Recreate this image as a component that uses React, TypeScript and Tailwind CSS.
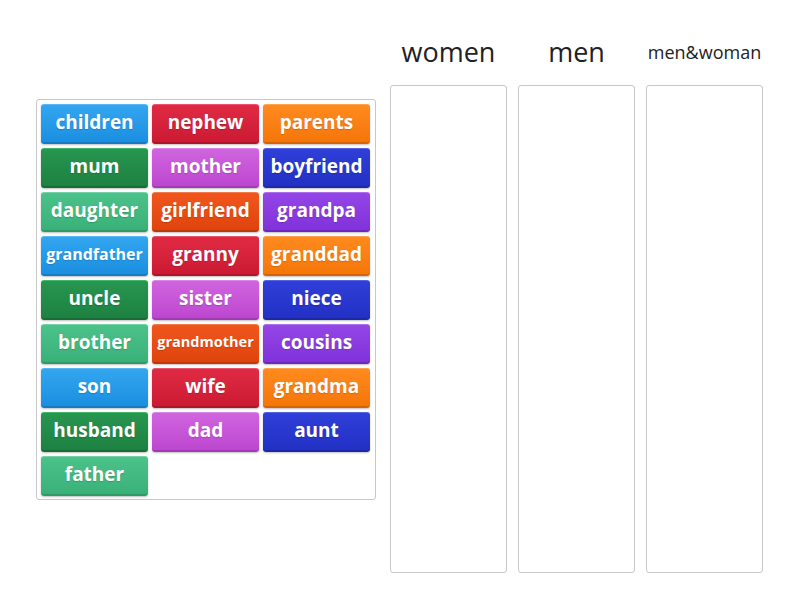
const tiles: { word: string; size?: string }[] = [
  { word: "children" },
  { word: "nephew" },
  { word: "parents" },
  { word: "mum" },
  { word: "mother" },
  { word: "boyfriend" },
  { word: "daughter" },
  { word: "girlfriend" },
  { word: "grandpa" },
  { word: "grandfather", size: "text-[16px]" },
  { word: "granny" },
  { word: "granddad" },
  { word: "uncle" },
  { word: "sister" },
  { word: "niece" },
  { word: "brother" },
  { word: "grandmother", size: "text-[14.5px]" },
  { word: "cousins" },
  { word: "son" },
  { word: "wife" },
  { word: "grandma" },
  { word: "husband" },
  { word: "dad" },
  { word: "aunt" },
  { word: "father" },
];

// nine colours, repeating in reading order
const colours = [
  "from-[#33a6f0] to-[#1a8ee0] border-t-[#5cb8f4] border-b-[#157bc4]",
  "from-[#e02a44] to-[#cc1a33] border-t-[#e9566b] border-b-[#b0142b]",
  "from-[#ff8a1e] to-[#f57608] border-t-[#ffa24d] border-b-[#d66405]",
  "from-[#279650] to-[#1d8141] border-t-[#3fb869] border-b-[#186d37]",
  "from-[#d064df] to-[#bd47d0] border-t-[#dc86e8] border-b-[#a23bb3]",
  "from-[#2f3fd8] to-[#2230c4] border-t-[#5462e4] border-b-[#1b28a8]",
  "from-[#4cc28b] to-[#38b177] border-t-[#74d2a6] border-b-[#2f9a66]",
  "from-[#f0561c] to-[#df440c] border-t-[#f47a4c] border-b-[#c0380a]",
  "from-[#9445e6] to-[#8132da] border-t-[#ab6eee] border-b-[#6d27bd]",
];

const groups = [
  { title: "women", size: "text-[27px]" },
  { title: "men", size: "text-[27px]" },
  { title: "men&woman", size: "text-[18px]" },
];

function Tile({ word, size, colour }: { word: string; size?: string; colour: string }) {
  return (
    <div
      className={`flex h-[40px] w-[107px] items-center justify-center rounded-[3px] border-t border-b-2 bg-linear-to-b pb-[3px] font-bold text-white shadow-[0_1px_2px_rgba(0,0,0,0.25)] [text-shadow:0_1px_1px_rgba(0,0,0,0.15)] ${colour} ${size ?? "text-[19px]"}`}
    >
      {word}
    </div>
  );
}

export default function App() {
  return (
    <div className="flex h-[600px] w-[800px] items-start bg-white pl-[36px] font-['Open_Sans',sans-serif]">
      <div className="mt-[99px] rounded-[3px] border border-[#c8c8c8] pt-[4px] pr-[5px] pb-[3px] pl-[4px]">
        <div className="grid grid-cols-[repeat(3,107px)] gap-[4px]">
          {tiles.map((t, i) => (
            <Tile key={t.word} word={t.word} size={t.size} colour={colours[i % 9]} />
          ))}
        </div>
      </div>

      <div className="ml-[14px] flex gap-[11px] pt-[36px]">
        {groups.map((g) => (
          <div key={g.title} className="flex w-[117px] flex-col">
            <div className={`flex h-[32px] items-center justify-center text-[#222] ${g.size}`}>
              {g.title}
            </div>
            <div className="mt-[17px] h-[488px] rounded-[3px] border border-[#c8c8c8] bg-white" />
          </div>
        ))}
      </div>
    </div>
  );
}
